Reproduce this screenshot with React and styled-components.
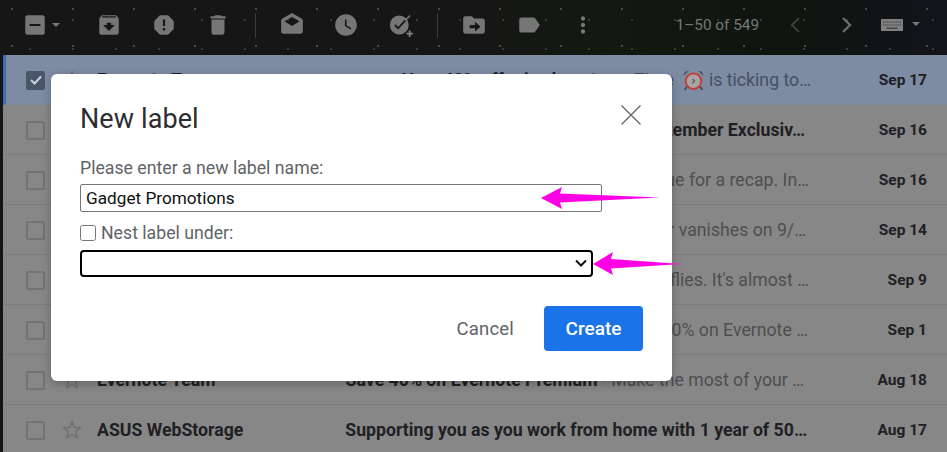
import styled, { createGlobalStyle } from "styled-components";

const GlobalStyle = createGlobalStyle`
  html, body {
    margin: 0;
    padding: 0;
    background: #141414;
  }
  body {
    font-family: Roboto, "Liberation Sans", sans-serif;
  }
`;

const Page = styled.div`
  position: relative;
  width: 947px;
  height: 452px;
  overflow: hidden;
  background: #161616;
`;

const Toolbar = styled.div`
  display: flex;
  align-items: center;
  height: 55px;
  padding: 0 0 5px 22px;
  box-sizing: border-box;
  color: #767676;
  background:
    radial-gradient(circle at 12px 9px, #4a4a4a 0.7px, transparent 1.2px) 0 0 / 61px 37px,
    radial-gradient(circle at 30px 20px, #3a3a3a 0.7px, transparent 1.2px) 0 0 / 43px 29px,
    linear-gradient(90deg, #171616 0, #161616 480px, #111a0e 620px, #0f150f 780px, #12141a 947px);
`;

const SelectGroup = styled.div`
  display: flex;
  align-items: center;
  width: 60px;
  gap: 4px;
`;

const ToolButton = styled.div`
  display: flex;
  align-items: center;
  justify-content: center;
  width: 54.5px;
  flex: none;
`;

const Separator = styled.div`
  width: 1px;
  height: 25px;
  margin: 0 9px;
  background: #3c3c3c;
  flex: none;
`;

const Caret = styled.div`
  width: 0;
  height: 0;
  border-left: 4.5px solid transparent;
  border-right: 4.5px solid transparent;
  border-top: 4px solid #767676;
`;

const Pager = styled.div`
  display: flex;
  align-items: center;
  margin-left: auto;
  padding-right: 27px;
`;

const PageCount = styled.span`
  font-size: 15.3px;
  color: #77787a;
  margin-right: 13px;
  white-space: nowrap;
`;

const PagerArrow = styled.div`
  display: flex;
  justify-content: center;
  width: 50px;
  color: ${(p) => (p.$dim ? "#3c3c3c" : "#6f6f6f")};
`;

const KeyboardIcon = styled.svg`
  width: 22px;
  height: 12px;
  margin-left: 9px;
`;

const KeyboardCaret = styled(Caret)`
  margin-left: 9px;
  margin-bottom: 3px;
`;

const List = styled.div`
  display: flex;
  flex-direction: column;
`;

const Row = styled.div`
  display: flex;
  align-items: center;
  height: 50px;
  box-sizing: border-box;
  margin-left: 3px;
  padding: 1px 20px 0 0;
  background: ${(p) => (p.$selected ? "#7d8ba3" : "#878787")};
  border-left: 3px solid ${(p) => (p.$selected ? "#3e6cb0" : "#878787")};
  border-bottom: 1px solid ${(p) => (p.$selected ? "#7d8ba3" : "#7c7c7c")};
  font-size: 17.7px;
`;

const CheckBox = styled.div`
  display: flex;
  align-items: center;
  justify-content: center;
  width: 19px;
  height: 19px;
  box-sizing: border-box;
  margin-left: 20px;
  flex: none;
  border-radius: 2px;
  border: 2px solid ${(p) => (p.$checked ? "#4b5568" : "#737373")};
  background: ${(p) => (p.$checked ? "#4b5568" : "transparent")};
`;

const StarSlot = styled.div`
  display: flex;
  width: 52px;
  justify-content: center;
  padding-left: 2px;
  box-sizing: border-box;
  flex: none;
  color: #707070;
`;

const Sender = styled.div`
  width: 247px;
  flex: none;
  font-weight: 700;
  color: #1f2024;
  white-space: nowrap;
`;

const Subject = styled.div`
  flex: 1;
  min-width: 0;
  display: flex;
  justify-content: flex-end;
  align-items: center;
  white-space: nowrap;
  margin-right: ${(p) => p.$end}px;
`;

const Strong = styled.span`
  font-weight: 700;
  color: #1f2024;
`;

const Snippet = styled.span`
  color: ${(p) => (p.$selected ? "#474f60" : "#4e4e50")};
`;

const AlarmGlyph = styled.svg`
  width: 21px;
  height: 21px;
  margin: 0 5px 0 9px;
  flex: none;
`;

const DateCell = styled.div`
  width: 80px;
  flex: none;
  text-align: right;
  font-size: 15.5px;
  font-weight: 700;
  color: #1f2024;
`;

const Modal = styled.div`
  position: absolute;
  left: 51px;
  top: 74px;
  width: 621px;
  height: 307px;
  box-sizing: border-box;
  padding: 27px 29px 30px 29px;
  display: flex;
  flex-direction: column;
  background: #fff;
  border-radius: 6px;
  box-shadow: 0 3px 10px rgba(0, 0, 0, 0.25);
`;

const TitleRow = styled.div`
  display: flex;
  justify-content: space-between;
  align-items: flex-start;
  margin-bottom: 21px;
`;

const Title = styled.h1`
  margin: 0;
  font-size: 27px;
  font-weight: 400;
  line-height: 36px;
  letter-spacing: 0.1px;
  color: #2b2d30;
`;

const CloseIcon = styled.svg`
  width: 20px;
  height: 20px;
  margin: 4px 2px 0 0;
  color: #5f6368;
`;

const FieldLabel = styled.label`
  display: block;
  font-size: 17.7px;
  line-height: 20px;
  color: #5f6368;
  margin-bottom: 6px;
`;

const NameInput = styled.input`
  display: block;
  width: 522px;
  height: 28px;
  box-sizing: border-box;
  padding: 0 5px;
  border: 1px solid #767676;
  border-radius: 2px;
  font-family: inherit;
  font-size: 17.2px;
  color: #111;
  outline: none;
`;

const NestRow = styled.label`
  display: flex;
  align-items: center;
  gap: 5px;
  margin: 11px 0 7px;
  font-size: 17.7px;
  line-height: 20px;
  color: #5f6368;
`;

const NestCheck = styled.input`
  width: 16px;
  height: 16px;
  margin: 0;
`;

const SelectWrap = styled.div`
  position: relative;
  width: 513px;
`;

const ParentSelect = styled.select`
  display: block;
  width: 100%;
  height: 27px;
  box-sizing: border-box;
  border: 2px solid #000;
  border-radius: 4px;
  background: #fff;
  outline: none;
  appearance: none;
`;

const SelectChevron = styled.svg`
  position: absolute;
  right: 6px;
  top: 9px;
  width: 12px;
  height: 8px;
  pointer-events: none;
`;

const Actions = styled.div`
  display: flex;
  justify-content: flex-end;
  align-items: center;
  gap: 30px;
  margin-top: auto;
`;

const CancelButton = styled.button`
  border: 0;
  padding: 0;
  background: none;
  font-family: inherit;
  font-size: 18.5px;
  font-weight: 400;
  letter-spacing: 0.2px;
  color: #5f6368;
`;

const CreateButton = styled.button`
  width: 99px;
  height: 45px;
  border: 0;
  border-radius: 4px;
  background: #1a73e8;
  font-family: inherit;
  font-size: 19px;
  font-weight: 500;
  color: #fff;
`;

const Arrow = styled.svg`
  position: absolute;
  left: ${(p) => p.$x}px;
  top: ${(p) => p.$y}px;
`;

const ICONS = {
  minus: "M19 3H5c-1.1 0-2 .9-2 2v14c0 1.1.9 2 2 2h14c1.1 0 2-.9 2-2V5c0-1.1-.9-2-2-2zm-2 10H7v-2h10v2z",
  archive: "M20.54 5.23l-1.39-1.68C18.88 3.21 18.47 3 18 3H6c-.47 0-.88.21-1.16.55L3.46 5.23C3.17 5.57 3 6.02 3 6.5V19c0 1.1.9 2 2 2h14c1.1 0 2-.9 2-2V6.5c0-.48-.17-.93-.46-1.27zM12 17.5L6.5 12H10v-2h4v2h3.5L12 17.5zM5.12 5l.81-1h12l.94 1H5.12z",
  report: "M15.73 3H8.27L3 8.27v7.46L8.27 21h7.46L21 15.73V8.27L15.73 3zM12 17.3c-.72 0-1.3-.58-1.3-1.3 0-.72.58-1.3 1.3-1.3.72 0 1.3.58 1.3 1.3 0 .72-.58 1.3-1.3 1.3zm1-4.3h-2V7h2v6z",
  trash: "M6 19c0 1.1.9 2 2 2h8c1.1 0 2-.9 2-2V7H6v12zM19 4h-3.5l-1-1h-5l-1 1H5v2h14V4z",
  drafts: "M21.99 8c0-.72-.37-1.35-.94-1.7L12 1 2.95 6.3C2.38 6.65 2 7.28 2 8v10c0 1.1.9 2 2 2h16c1.1 0 2-.9 2-2l-.01-10zM12 13L5 8.5 12 4.5l7 4L12 13z",
  clock: "M12 2C6.48 2 2 6.48 2 12s4.48 10 10 10 10-4.48 10-10S17.52 2 12 2zm4.2 14.2L11 13V7h1.5v5.2l4.5 2.7-.8 1.3z",
  move: "M20 6h-8l-2-2H4c-1.1 0-1.99.9-1.99 2L2 18c0 1.1.9 2 2 2h16c1.1 0 2-.9 2-2V8c0-1.1-.9-2-2-2zm-7 12v-3H8v-3h5V9l5 4.5-5 4.5z",
  label: "M17.63 5.84C17.27 5.33 16.67 5 16 5L5 5.01C3.9 5.01 3 5.9 3 7v10c0 1.1.9 1.99 2 1.99L16 19c.67 0 1.27-.33 1.63-.84L22 12l-4.37-6.16z",
  dots: "M12 8c1.1 0 2-.9 2-2s-.9-2-2-2-2 .9-2 2 .9 2 2 2zm0 2c-1.1 0-2 .9-2 2s.9 2 2 2 2-.9 2-2-.9-2-2-2zm0 6c-1.1 0-2 .9-2 2s.9 2 2 2 2-.9 2-2-.9-2-2-2z",
};

const Icon = ({ name, size = 26 }) => (
  <svg width={size} height={size} viewBox="0 0 24 24" fill="currentColor">
    <path fillRule="evenodd" d={ICONS[name]} />
  </svg>
);

const AddTask = () => (
  <svg width="26" height="26" viewBox="0 0 24 24" fill="none">
    <circle cx="10.4" cy="12" r="8.7" fill="currentColor" />
    <path d="M6.4 12l3 3 6.6-7.2" stroke="#161616" strokeWidth="1.7" />
    <path d="M16 7.8l4.4-4.6" stroke="currentColor" strokeWidth="1.4" />
    <path d="M20 17v6M17 20h6" stroke="#808080" strokeWidth="1.7" />
  </svg>
);

const Chevron = ({ left }) => (
  <svg width="14" height="20" viewBox="0 0 14 20" fill="none" stroke="currentColor" strokeWidth="2.2">
    <path d={left ? "M9 3 2 10l7 7" : "M3 3l7 7-7 7"} />
  </svg>
);

const Keyboard = () => (
  <KeyboardIcon viewBox="0 0 22 12">
    <rect width="22" height="12" rx="0.5" fill="#808080" />
    <path d="M2 3h18M2 6h18" stroke="#3a3a3a" strokeWidth="1.2" strokeDasharray="1.2 0.9" />
    <path d="M5.5 9.2h11" stroke="#3a3a3a" strokeWidth="1.2" />
  </KeyboardIcon>
);

const Star = () => (
  <svg width="24" height="24" viewBox="0 0 24 24" fill="currentColor">
    <path d="M22 9.24l-7.19-.62L12 2 9.19 8.63 2 9.24l5.46 4.73L5.82 21 12 17.27 18.18 21l-1.63-7.03L22 9.24zM12 15.4l-3.76 2.27 1-4.28-3.32-2.88 4.38-.38L12 6.1l1.71 4.04 4.38.38-3.32 2.88 1 4.28L12 15.4z" />
  </svg>
);

const Alarm = () => (
  <AlarmGlyph viewBox="0.5 1 19 19">
    <path d="M1 6a4 4 0 0 1 5-4zM19 6a4 4 0 0 0-5-4z" fill="#4f5462" />
    <path d="M4 16l-2 3M16 16l2 3" stroke="#3f4450" strokeWidth="1.5" />
    <circle cx="10" cy="11" r="7" fill="#a9a3a6" stroke="#c93a2e" strokeWidth="1.6" />
    <path d="M9 9l2 2-2 2" fill="none" stroke="#555" strokeWidth="1" />
  </AlarmGlyph>
);

const rows = [
  {
    id: 1,
    sender: "Evernote Team",
    strong: "Your 40% offer is almost up",
    snippet: "- Time",
    tail: "is ticking to…",
    date: "Sep 17",
    end: 36,
    selected: true,
  },
  { id: 2, sender: "ASUS", strong: "Gadgets and more in our September Exclusiv…", date: "Sep 16", end: 42 },
  { id: 3, sender: "Evernote Team", strong: "August in review", snippet: "- Your month is due for a recap. In…", date: "Sep 16", end: 38 },
  { id: 4, sender: "Evernote Team", strong: "Last chance", snippet: "- This offer vanishes on 9/…", date: "Sep 14", end: 41 },
  { id: 5, sender: "Evernote Team", strong: "Summer sale", snippet: "- Time flies. It's almost …", date: "Sep 9", end: 38 },
  { id: 6, sender: "Evernote Team", strong: "A treat for you", snippet: "- Save 40% on Evernote …", date: "Sep 1", end: 39 },
  { id: 7, sender: "Evernote Team", strong: "Save 40% on Evernote Premium", snippet: "- Make the most of your …", date: "Aug 18", end: 43 },
  { id: 8, sender: "ASUS WebStorage", strong: "Supporting you as you work from home with 1 year of 50…", date: "Aug 17", end: 40 },
];

function App() {
  return (
    <Page>
      <GlobalStyle />
      <Toolbar>
        <SelectGroup>
          <Icon name="minus" />
          <Caret />
        </SelectGroup>
        <ToolButton><Icon name="archive" /></ToolButton>
        <ToolButton><Icon name="report" /></ToolButton>
        <ToolButton><Icon name="trash" /></ToolButton>
        <Separator />
        <ToolButton><Icon name="drafts" /></ToolButton>
        <ToolButton><Icon name="clock" /></ToolButton>
        <ToolButton><AddTask /></ToolButton>
        <Separator />
        <ToolButton><Icon name="move" /></ToolButton>
        <ToolButton><Icon name="label" /></ToolButton>
        <ToolButton><Icon name="dots" /></ToolButton>
        <Pager>
          <PageCount>1–50 of 549</PageCount>
          <PagerArrow $dim><Chevron left /></PagerArrow>
          <PagerArrow><Chevron /></PagerArrow>
          <Keyboard />
          <KeyboardCaret />
        </Pager>
      </Toolbar>
      <List>
        {rows.map((row) => (
          <Row key={row.id} $selected={row.selected}>
            <CheckBox $checked={row.selected}>
              {row.selected && (
                <svg width="14" height="14" viewBox="0 0 14 14" fill="none" stroke="#c9d2e0" strokeWidth="2">
                  <path d="M2 7l3.5 3.5L12 3.5" />
                </svg>
              )}
            </CheckBox>
            <StarSlot><Star /></StarSlot>
            <Sender>{row.sender}</Sender>
            <Subject $end={row.end}>
              <Strong>{row.strong}</Strong>
              {row.snippet && <Snippet $selected={row.selected}>&nbsp;{row.snippet}</Snippet>}
              {row.tail && <Alarm />}
              {row.tail && <Snippet $selected>{row.tail}</Snippet>}
            </Subject>
            <DateCell>{row.date}</DateCell>
          </Row>
        ))}
      </List>
      <Modal>
        <TitleRow>
          <Title>New label</Title>
          <CloseIcon viewBox="0 0 20 20" fill="none" stroke="currentColor" strokeWidth="1.3">
            <path d="M0.5 0.5l19 19M19.5 0.5l-19 19" />
          </CloseIcon>
        </TitleRow>
        <FieldLabel htmlFor="label-name">Please enter a new label name:</FieldLabel>
        <NameInput id="label-name" defaultValue="Gadget Promotions" />
        <NestRow>
          <NestCheck type="checkbox" />
          Nest label under:
        </NestRow>
        <SelectWrap>
          <ParentSelect aria-label="Parent label">
            <option value=""></option>
          </ParentSelect>
          <SelectChevron viewBox="0 0 12 8" fill="none" stroke="#111" strokeWidth="2">
            <path d="M1 1.5l5 5 5-5" />
          </SelectChevron>
        </SelectWrap>
        <Actions>
          <CancelButton>Cancel</CancelButton>
          <CreateButton>Create</CreateButton>
        </Actions>
      </Modal>
      <Arrow $x={541} $y={186} width="120" height="24" viewBox="0 0 120 24">
        <path d="M0 12 21 1 19 7.5 119 11.5 19 16.5 21 23z" fill="#ff00e6" />
      </Arrow>
      <Arrow $x={592} $y={251} width="92" height="25" viewBox="0 0 92 25">
        <path d="M1 13 21 1 19 8 90 13 19 17.5 21 24z" fill="#ff00e6" />
      </Arrow>
    </Page>
  );
}

export default App;
